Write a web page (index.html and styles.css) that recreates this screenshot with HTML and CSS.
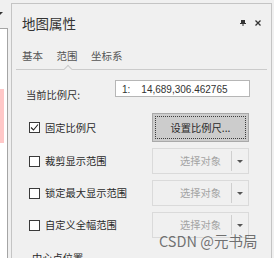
FILE: index.html
```html
<!DOCTYPE html>
<html lang="zh-CN">
<head>
<meta charset="UTF-8" />
<title>地图属性</title>
<link rel="stylesheet" href="styles.css">
</head>
<body>

<div class="screen">
    <!-- left dock edge -->
    <div class="side">
        <div class="side-top"><span class="side-arrow"></span></div>
        <div class="side-list"><div class="side-mark"></div></div>
    </div>

    <!-- MAP PROPERTIES PANEL -->
    <div class="panel">
        <div class="panel-head">
            <span class="panel-title">地图属性</span>
            <span class="panel-tools">
                <svg width="6" height="6" viewBox="0 0 6 6"><rect x="1" y="0" width="4" height="3" fill="#333"/><rect x="0" y="3" width="6" height="1" fill="#333"/><rect x="2.5" y="4" width="1" height="2" fill="#333"/></svg>
                <svg width="6" height="6" viewBox="0 0 6 6"><path d="M0.5 0.5 L5.5 5.5 M5.5 0.5 L0.5 5.5" stroke="#333" stroke-width="1.3"/></svg>
            </span>
        </div>

        <div class="tabs">
            <span class="tab">基本</span>
            <span class="tab active">范围</span>
            <span class="tab">坐标系</span>
        </div>

        <div class="tab-body">
            <div class="scale-row">
                <span class="scale-label">当前比例尺:</span>
                <div class="scale-value"><span class="ratio">1:</span><span>14,689,306.462765</span></div>
            </div>

            <div class="opt-row first">
                <label class="check"><span class="box"><svg width="9" height="9" viewBox="0 0 9 9"><path d="M1 4.5 L3.5 7 L8 1.5" fill="none" stroke="#222" stroke-width="1.1"/></svg></span>固定比例尺</label>
                <button class="btn">设置比例尺...</button>
            </div>

            <div class="opt-row">
                <label class="check"><span class="box"></span>裁剪显示范围</label>
                <div class="combo"><span class="combo-text">选择对象</span><span class="combo-sep"></span><span class="combo-arrow"><i></i></span></div>
            </div>

            <div class="opt-row">
                <label class="check"><span class="box"></span>锁定最大显示范围</label>
                <div class="combo"><span class="combo-text">选择对象</span><span class="combo-sep"></span><span class="combo-arrow"><i></i></span></div>
            </div>

            <div class="opt-row">
                <label class="check"><span class="box"></span>自定义全幅范围</label>
                <div class="combo"><span class="combo-text">选择对象</span><span class="combo-sep"></span><span class="combo-arrow"><i></i></span></div>
            </div>

            <div class="group-title">中心点位置</div>
        </div>
    </div>
</div>

<div class="watermark">CSDN @元书局</div>

</body>
</html>
```

FILE: styles.css
```css
* { margin: 0; padding: 0; box-sizing: border-box; }

body {
    background: #f0f0f0;
    color: #2a2a2a;
    font-family: "Noto Sans CJK SC", "Liberation Sans", sans-serif;
    font-size: 10.25px;
    overflow: hidden;
}

.screen {
    display: flex;
    height: 258px;
    overflow: hidden;
}

/* left dock edge */
.side {
    width: 11px;
    flex-shrink: 0;
    display: flex;
    flex-direction: column;
    overflow: hidden;
}

.side-top {
    height: 28px;
    padding-top: 12px;
}

.side-arrow {
    display: block;
    width: 0;
    height: 0;
    margin-left: -3px;
    border-left: 3px solid transparent;
    border-right: 3px solid transparent;
    border-top: 3px solid #333;
}

.side-list {
    flex: 1;
    width: 8px;
    background: #fff;
    border-top: 1px solid #a5a5a5;
    border-right: 1px solid #a5a5a5;
}

.side-mark {
    width: 4px;
    height: 54px;
    margin-top: 60px;
    background: #ffc8c8;
}

/* panel */
.panel {
    width: 261px;
    height: 262px;
    margin-top: 3px;
    flex-shrink: 0;
    background: #f0f0f0;
    border: 1px solid #c4c4c4;
}

.panel-head {
    height: 38px;
    padding: 0 10px;
    display: flex;
    align-items: center;
    justify-content: space-between;
}

.panel-title {
    font-size: 13.5px;
    color: #333;
}

.panel-tools {
    display: flex;
    gap: 9px;
    align-items: center;
}

.panel-tools svg { display: block; }

.tabs {
    margin: 0 4px;
    padding: 6px 6px 5px;
    display: flex;
    gap: 13.5px;
    font-size: 10.5px;
    line-height: 16px;
    color: #555;
    border-bottom: 1px solid #cbcbcb;
}

.tab { position: relative; }

.tab.active::after {
    content: "";
    position: absolute;
    left: 50%;
    bottom: -8px;
    width: 5px;
    height: 5px;
    margin-left: -2.5px;
    background: #f0f0f0;
    border-left: 1px solid #cbcbcb;
    border-top: 1px solid #cbcbcb;
    transform: rotate(45deg);
}

.tab-body {
    padding-left: 14px;
}

.scale-row {
    display: flex;
    align-items: flex-start;
    margin-top: 10px;
}

.scale-label {
    width: 89px;
    margin-top: 8px;
    line-height: 14px;
    color: #333;
}

.scale-value {
    width: 135px;
    height: 17px;
    padding: 3px 0 0 6px;
    display: flex;
    background: #fff;
    border: 1px solid #b6b6b6;
    font-family: "Liberation Sans", sans-serif;
    font-size: 10px;
    line-height: 12px;
    color: #333;
}

.ratio { margin-right: 11px; }

.opt-row {
    display: flex;
    align-items: center;
    margin-top: 6px;
    padding-left: 3px;
}

.opt-row.first { margin-top: 11px; }

.check {
    width: 123px;
    display: flex;
    align-items: center;
    gap: 5px;
    line-height: 14px;
}

.box {
    width: 11px;
    height: 11px;
    display: flex;
    align-items: center;
    justify-content: center;
    background: #fff;
    border: 1px solid #3a3a3a;
}

.btn {
    width: 97px;
    height: 29px;
    background: #cccccc;
    border: 1px solid #a9a9a9;
    outline: 1px dotted #3c3c3c;
    outline-offset: -4px;
    font: inherit;
    color: #2a2a2a;
}

.combo {
    width: 97px;
    height: 26px;
    display: flex;
    align-items: center;
    background: #f0f0f0;
    border: 1px solid #dadada;
}

.combo-text {
    flex: 1;
    padding-left: 17px;
    text-align: center;
    color: #a3a3a3;
    line-height: 14px;
}

.combo-sep {
    width: 1px;
    height: 20px;
    background: #cfcfcf;
}

.combo-arrow {
    width: 16px;
    display: flex;
    justify-content: center;
}

.combo-arrow i {
    width: 0;
    height: 0;
    border-left: 3px solid transparent;
    border-right: 3px solid transparent;
    border-top: 3px solid #555;
}

.group-title {
    margin-top: 13px;
    padding-left: 6px;
    line-height: 14px;
}

.watermark {
    position: absolute;
    left: 159px;
    top: 232px;
    font-size: 14.5px;
    line-height: 17px;
    color: rgba(70, 70, 70, 0.75);
}
```
